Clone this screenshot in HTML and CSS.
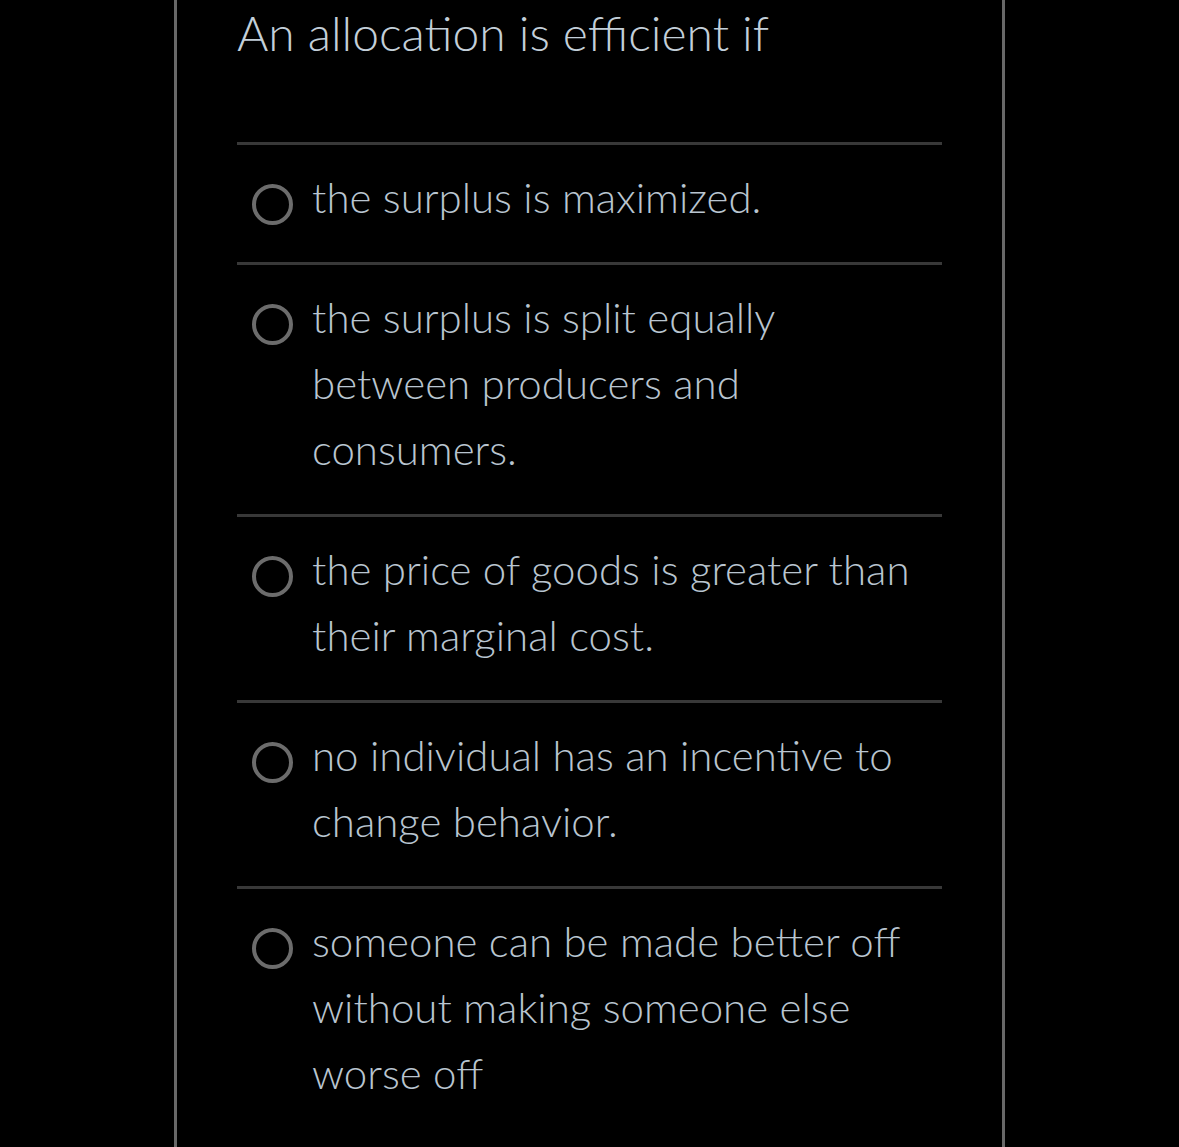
FILE: index.html
```html
<!DOCTYPE html>
<html lang="en">
<head>
<meta charset="utf-8">
<link rel="stylesheet" href="styles.css">
<title>Question</title>
</head>
<body>
<div class="panel">
  <div class="question">An allocation is efficient if</div>
  <ul class="options">
    <li class="option"><span class="radio"></span><span class="label">the surplus is maximized.</span></li>
    <li class="option"><span class="radio"></span><span class="label">the surplus is split equally between producers and consumers.</span></li>
    <li class="option"><span class="radio"></span><span class="label">the price of goods is greater than their marginal cost.</span></li>
    <li class="option"><span class="radio"></span><span class="label">no individual has an incentive to change behavior.</span></li>
    <li class="option"><span class="radio"></span><span class="label">someone can be made better off without making someone else worse off</span></li>
  </ul>
</div>
</body>
</html>
```

FILE: styles.css
```css
html, body {
  margin: 0;
  padding: 0;
  background: #000;
}
body {
  font-family: Lato, "Open Sans", sans-serif;
  height: 1147px;
  overflow: hidden;
}
.panel {
  margin: 0 auto;
  height: 1147px;
  border-left: 3px solid #686868;
  border-right: 3px solid #686868;
  padding: 0 60px;
  box-sizing: border-box;
  width: 831px;
}
.question {
  font-weight: 300;
  font-size: 48px;
  line-height: 66px;
  color: #c3cfd9;
  margin-bottom: 76px;
}
.options {
  list-style: none;
  margin: 0;
  padding: 0;
}
.option {
  display: flex;
  align-items: flex-start;
  border-top: 3px solid #383838;
  padding: 19px 0 32px 15px;
  gap: 19px;
}
.radio {
  flex: none;
  width: 41px;
  height: 41px;
  box-sizing: border-box;
  border: 4px solid #6c6c6c;
  border-radius: 50%;
  margin-top: 20px;
}
.label {
  font-weight: 300;
  font-size: 42px;
  line-height: 66px;
  color: #b9c5d0;
  max-width: 610px;
}
```
